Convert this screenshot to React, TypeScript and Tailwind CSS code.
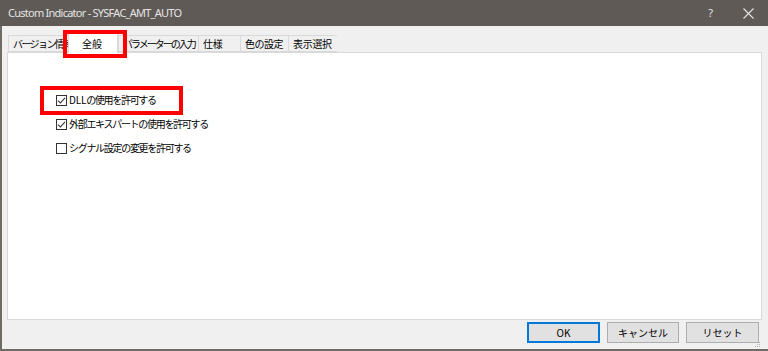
import React from "react";

const jp = { fontFamily: '"Noto Sans CJK JP", "Noto Sans", sans-serif' };

const tabs = [
    { label: "バージョン情報", w: "w-[60px]", t: "tracking-[-1.6px]" },
    { label: "全般", w: "w-[50px]", t: "", active: true },
    { label: "パラメーターの入力", w: "w-[80px]", t: "tracking-[-2px]" },
    { label: "仕様", w: "w-[42px]", t: "tracking-[-0.3px]" },
    { label: "色の設定", w: "w-[48px]", t: "tracking-[-0.5px]" },
    { label: "表示選択", w: "w-[49px]", t: "tracking-[-0.3px]" },
];

const options = [
    { prefix: "DLL", label: "の使用を許可する", checked: true, marked: true },
    { prefix: "", label: "外部エキスパートの使用を許可する", checked: true },
    { prefix: "", label: "シグナル設定の変更を許可する", checked: false },
];

function CheckBox(props: { checked: boolean }) {
    return (
        <div className="w-[11px] h-[11px] border border-[#333333] bg-white flex items-center justify-center">
            {props.checked && (
                <svg width="9" height="9" viewBox="0 0 9 9">
                    <path d="M1 4.6 L3.4 7 L8 1.8" fill="none" stroke="#333333" strokeWidth="1.1" />
                </svg>
            )}
        </div>
    );
}

function Tab(props: { label: string; w: string; t: string; active?: boolean }) {
    if (props.active) {
        return (
            <div className={`relative ${props.w} h-[21px] -mb-px bg-white border border-b-0 border-[#d9d9d9] flex items-center pl-[13px] text-[10px] text-black z-10`} style={jp}>
                {props.label}
                <div className="absolute -left-[6px] -right-[10px] -top-[3px] -bottom-[5px] border-[4px] border-[#ff0000]" />
            </div>
        );
    }
    return (
        <div className={`${props.w} h-[17px] bg-[#f0f0f0] border border-r-0 border-[#d9d9d9] flex items-center pl-[4px] text-[10px] ${props.t} text-black whitespace-nowrap`} style={jp}>
            {props.label}
        </div>
    );
}

function DialogButton(props: { label: string; primary?: boolean; w: string }) {
    return (
        <div
            className={`${props.w} h-[21px] bg-[#e1e1e1] flex items-center justify-center text-[10px] text-black ${props.primary ? "border-2 border-[#0078d7]" : "border border-[#adadad]"}`}
            style={jp}
        >
            {props.label}
        </div>
    );
}

export default function App() {
    return (
        <div className="w-[768px] h-[351px] flex flex-col overflow-hidden">
            <div className="h-[26px] bg-[#5f5a55] flex items-center pl-[8px] pr-[14px] text-[#e4e4e4]">
                <span className="text-[11px] tracking-[-0.75px]" style={{ fontFamily: '"Noto Sans", sans-serif' }}>
                    Custom Indicator - SYSFAC_AMT_AUTO
                </span>
                <div className="flex-1" />
                <span className="text-[11px] mr-[30px]" style={{ fontFamily: '"Noto Sans", sans-serif' }}>?</span>
                <svg width="11" height="11" viewBox="0 0 11 11">
                    <path d="M0.5 0.5 L10.5 10.5 M10.5 0.5 L0.5 10.5" stroke="#e4e4e4" strokeWidth="1.1" />
                </svg>
            </div>

            <div className="flex-1 bg-[#f0f0f0] border-l-2 border-b-2 border-[#6f6b67] flex flex-col pl-[5px] pr-[6px]">
                <div className="h-[26px] flex items-end pl-[1px]">
                    {tabs.map((tab, index) => <Tab key={index} {...tab} />)}
                </div>

                <div className="h-[268px] bg-white border border-[#d9d9d9] pt-[35px] pl-[48px]">
                    {options.map((option, index) => (
                        <div key={index} className="relative h-[24px] flex items-center gap-[2px]">
                            <CheckBox checked={option.checked} />
                            <span className="text-[10px] text-black leading-none" style={jp}>
                                {option.prefix && <span className="tracking-[-0.2px]">{option.prefix}</span>}
                                <span className="tracking-[-1.3px]">{option.label}</span>
                            </span>
                            {option.marked && (
                                <div className="absolute -left-[16px] w-[143px] -top-[2px] h-[29px] border-[4px] border-[#ff0000]" />
                            )}
                        </div>
                    ))}
                </div>

                <div className="relative flex-1 flex justify-end items-start pt-[2px] gap-[7px] pr-[3px]">
                    <DialogButton label="OK" primary w="w-[73px]" />
                    <DialogButton label="キャンセル" w="w-[72px]" />
                    <DialogButton label="リセット" w="w-[73px]" />
                    <svg className="absolute right-[1px] bottom-[1px]" width="6" height="6" viewBox="0 0 6 6">
                        <rect x="4" y="0" width="1" height="1" fill="#b0b0b0" />
                        <rect x="2" y="2" width="1" height="1" fill="#b0b0b0" />
                        <rect x="4" y="2" width="1" height="1" fill="#b0b0b0" />
                        <rect x="0" y="4" width="1" height="1" fill="#b0b0b0" />
                        <rect x="2" y="4" width="1" height="1" fill="#b0b0b0" />
                        <rect x="4" y="4" width="1" height="1" fill="#b0b0b0" />
                    </svg>
                </div>
            </div>
        </div>
    );
}
